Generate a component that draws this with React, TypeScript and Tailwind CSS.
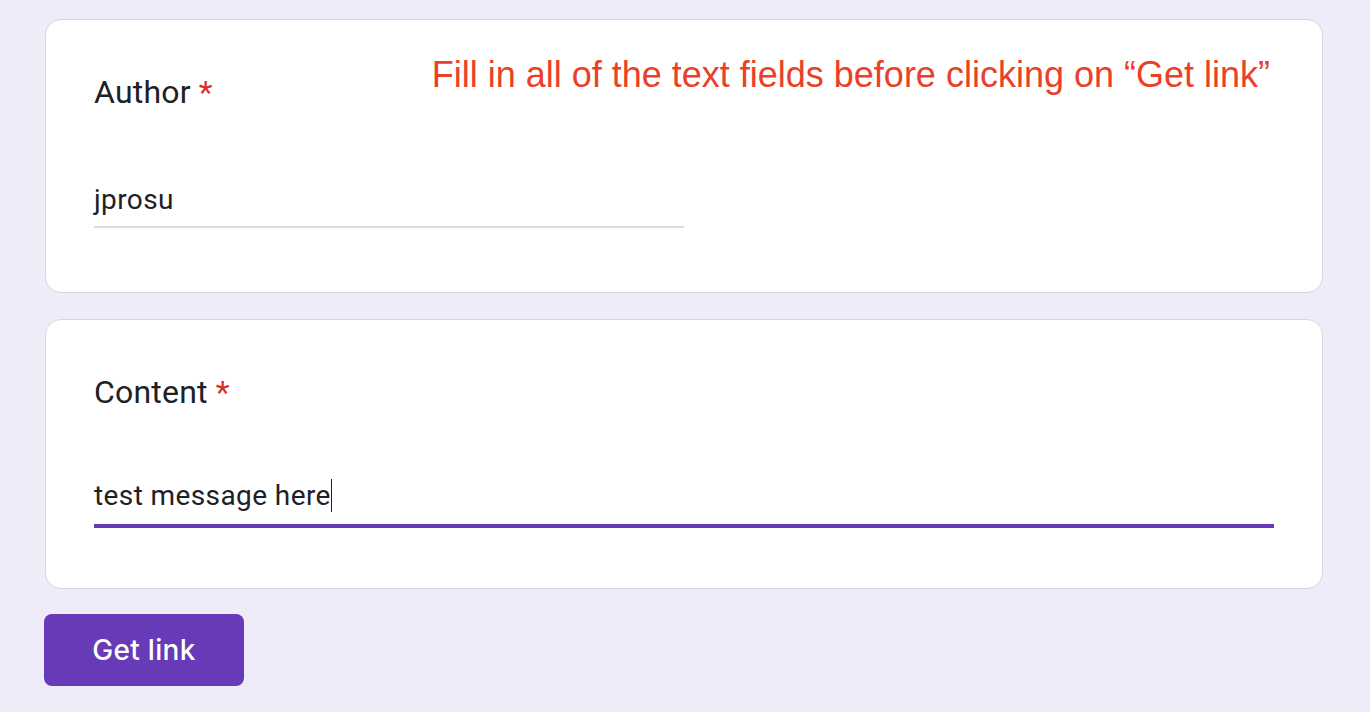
import React from 'react';

const roboto = { fontFamily: 'Roboto, "Noto Sans", Arial, sans-serif' };

function Question({
  title,
  children,
  className = '',
}: {
  title: string;
  children: React.ReactNode;
  className?: string;
}) {
  return (
    <div className={`relative bg-white border border-[#d6d6dc] rounded-[16px] px-[48px] pt-[48px] ${className}`}>
      <div className="text-[32px] leading-[48px] text-[#202124] tracking-[0.2px]">
        {title}
        <span className="text-[#d93025]"> *</span>
      </div>
      {children}
    </div>
  );
}

export default function App() {
  return (
    <div className="min-h-screen bg-[#f0ebf8] pt-[19px]" style={roboto}>
      <div className="ml-[45px] w-[1278px] flex flex-col">
        <Question title="Author" className="pb-[64px]">
          <div className="mt-[64px] w-[590px] border-b-2 border-[#dadce0] pb-[6px]">
            <div className="text-[28px] leading-[40px] text-[#202124] tracking-[0.4px]">jprosu</div>
          </div>
          {/* annotation over the card */}
          <div
            className="absolute right-[52px] top-[37px] text-[36px] leading-[36px] text-[#eb4028] whitespace-nowrap"
            style={{ fontFamily: '"Liberation Sans", Arial, sans-serif' }}
          >
            Fill in all of the text fields before clicking on “Get link”
          </div>
        </Question>

        <Question title="Content" className="mt-[26px] pb-[60px]">
          <div className="mt-[60px] border-b-4 border-[#673ab7] pb-[8px]">
            <div className="text-[28px] leading-[40px] text-[#202124] tracking-[0.4px]">
              test message here
              <span className="inline-block w-[1.5px] h-[33px] bg-[#202124] align-[-7px]" />
            </div>
          </div>
        </Question>

        <button
          className="mt-[25px] -ml-px w-[200px] h-[72px] rounded-[8px] bg-[#673ab7] text-white text-[28px] font-medium tracking-[0.3px] flex items-center justify-center"
          style={{ fontFamily: 'Inter, "Open Sans", sans-serif' }}
        >
          Get link
        </button>
      </div>
    </div>
  );
}
